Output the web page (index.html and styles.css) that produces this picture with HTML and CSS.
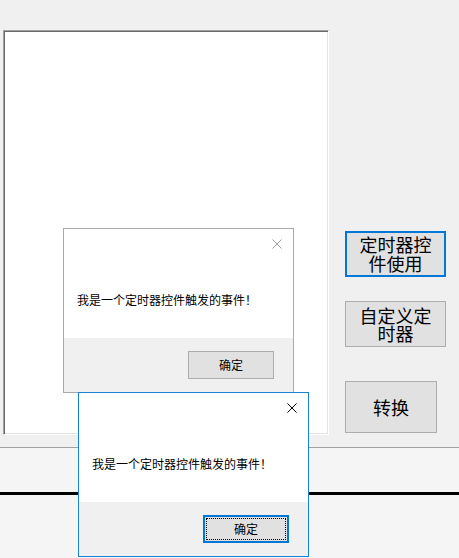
FILE: index.html
```html
<!DOCTYPE html>
<html lang="zh-CN">
<head>
    <meta charset="UTF-8">
    <meta name="viewport" content="width=device-width, initial-scale=1.0">
    <title>定时器</title>
    <link rel="stylesheet" href="styles.css">
</head>
<body>
    <div class="form">
        <div class="main">
            <div class="listbox"></div>
            <div class="buttons">
                <button class="btn btn-focus">定时器控<br>件使用</button>
                <button class="btn btn-custom">自定义定<br>时器</button>
                <button class="btn btn-convert">转换</button>
            </div>
        </div>
        <div class="status">
            <div class="rule"></div>
        </div>
    </div>

    <!-- message boxes raised by the timer -->
    <div class="dialog dialog-back">
        <div class="dlg-body">
            <svg class="dlg-close" width="10" height="10" viewBox="0 0 10 10"><path d="M0.5 0.5L9.5 9.5M9.5 0.5L0.5 9.5" stroke="currentColor" stroke-width="1" fill="none"/></svg>
            <div class="dlg-text">我是一个定时器控件触发的事件！</div>
        </div>
        <div class="dlg-foot">
            <button class="dlg-btn">确定</button>
        </div>
    </div>

    <div class="dialog dialog-front">
        <div class="dlg-body">
            <svg class="dlg-close" width="10" height="10" viewBox="0 0 10 10"><path d="M0.5 0.5L9.5 9.5M9.5 0.5L0.5 9.5" stroke="currentColor" stroke-width="1" fill="none"/></svg>
            <div class="dlg-text">我是一个定时器控件触发的事件！</div>
        </div>
        <div class="dlg-foot">
            <button class="dlg-btn">确定</button>
        </div>
    </div>
</body>
</html>
```

FILE: styles.css
```css
body {
    font-family: "Noto Sans CJK SC", "Noto Sans", sans-serif;
    margin: 0;
    padding: 0;
    background-color: #f0f0f0;
    height: 558px;
    overflow: hidden;
    position: relative;
}

.main {
    display: flex;
    align-items: flex-start;
    height: 447px;
    box-sizing: border-box;
    padding: 30px 0 0 3px;
}

.listbox {
    width: 326px;
    height: 405px;
    box-sizing: border-box;
    background-color: #fff;
    border-top: 1px solid #a0a0a0;
    border-left: 1px solid #a0a0a0;
    border-right: 1px solid #fff;
    border-bottom: 1px solid #fff;
    box-shadow: inset 1px 1px #696969, inset -1px -1px #e3e3e3;
}

.buttons {
    display: flex;
    flex-direction: column;
    margin-left: 16px;
    padding-top: 201px;
}

.btn {
    width: 101px;
    height: 46px;
    box-sizing: border-box;
    margin: 0;
    padding: 0;
    background-color: #e1e1e1;
    border: 1px solid #adadad;
    color: #000;
    font-family: inherit;
    font-size: 18px;
    line-height: 19px;
}

.btn-focus {
    border: 2px solid #0078d7;
}

.btn-custom {
    margin-top: 24px;
    line-height: 18px;
}

.btn-convert {
    margin-top: 34px;
    width: 92px;
    height: 52px;
}

.status {
    height: 111px;
    border-top: 1px solid #a0a0a0;
    background-color: #f5f5f5;
}

.rule {
    height: 3px;
    margin-top: 44px;
    background-color: #000;
}

.dialog {
    position: absolute;
    width: 231px;
    height: 165px;
    box-sizing: border-box;
    display: flex;
    flex-direction: column;
    background-color: #fff;
}

.dialog-back {
    left: 63px;
    top: 228px;
    border: 1px solid #aaaaaa;
    color: #a0a0a0;
}

.dialog-front {
    left: 78px;
    top: 392px;
    border: 1px solid #1883d7;
    color: #000;
}

.dlg-body {
    height: 109px;
    flex: none;
    box-sizing: border-box;
    padding: 10px 11px 0 13px;
    display: flex;
    flex-direction: column;
}

.dlg-close {
    align-self: flex-end;
    display: block;
}

.dlg-text {
    margin-top: 43px;
    font-size: 12px;
    line-height: 16px;
    color: #000;
    white-space: nowrap;
}

.dlg-foot {
    flex: 1;
    display: flex;
    justify-content: flex-end;
    align-items: flex-start;
    padding: 13px 19px 0 0;
    background-color: #f0f0f0;
}

.dlg-btn {
    width: 86px;
    height: 28px;
    box-sizing: border-box;
    margin: 0;
    padding: 0;
    background-color: #e1e1e1;
    border: 1px solid #adadad;
    color: #000;
    font-family: inherit;
    font-size: 12px;
    line-height: 16px;
    position: relative;
}

.dialog-front .dlg-btn {
    border: 2px solid #0078d7;
}

.dialog-front .dlg-btn::after {
    content: "";
    position: absolute;
    left: 1px;
    top: 1px;
    right: 1px;
    bottom: 1px;
    border: 1px dotted #000;
}
```
